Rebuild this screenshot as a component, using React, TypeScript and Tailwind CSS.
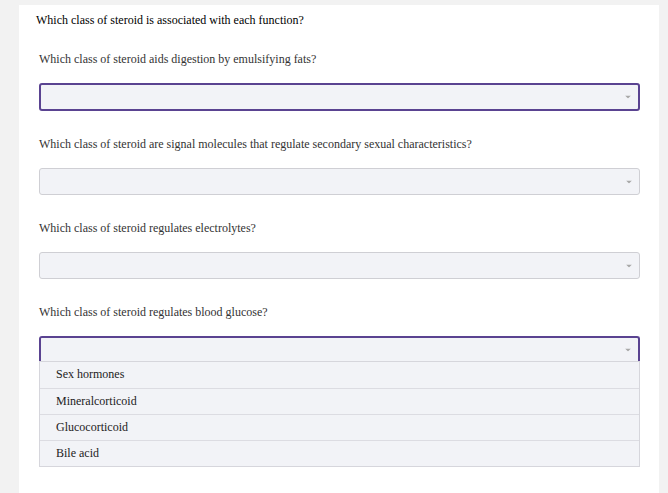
const questions = [
  "Which class of steroid aids digestion by emulsifying fats?",
  "Which class of steroid are signal molecules that regulate secondary sexual characteristics?",
  "Which class of steroid regulates electrolytes?",
  "Which class of steroid regulates blood glucose?",
];

const options = ["Sex hormones", "Mineralcorticoid", "Glucocorticoid", "Bile acid"];

function Arrow() {
  return (
    <svg width="6" height="3" viewBox="0 0 6 3" className="absolute right-[7px] top-1/2 -translate-y-1/2">
      <path d="M0 0 L6 0 L3 3 Z" fill="#a8a8a8" />
    </svg>
  );
}

function Select({ state }: { state: "focus" | "idle" | "open" }) {
  if (state === "open") {
    return (
      <div className="relative">
        <div className="relative h-[25px] rounded-t-[3px] border-2 border-b-0 border-[#5a4391] bg-[#f2f3f7]">
          <Arrow />
        </div>
        <div className="border border-[#d6d6dc] bg-[#f2f3f7]">
          {options.map((o, i) => (
            <div
              key={o}
              className={"h-[26px] flex items-center pl-[16px] pb-[2px] text-[12px] text-[#222] " + (i > 0 ? "border-t border-[#dcdce2]" : "")}
            >
              {o}
            </div>
          ))}
        </div>
      </div>
    );
  }
  return (
    <div
      className={
        "relative h-[27px] rounded-[3px] bg-[#f2f3f7] " +
        (state === "focus" ? "h-[28px] border-2 border-[#5a4391]" : "border border-[#cfcfd4]")
      }
    >
      <Arrow />
    </div>
  );
}

export default function App() {
  return (
    <div className="min-h-[493px] bg-[#f2f2f2] pl-[19px] pr-[9px] pt-[5px]" style={{ fontFamily: '"Liberation Serif", "Times New Roman", serif' }}>
      <div className="min-h-[488px] bg-white pl-[17px] pr-[19px] pt-[8px]">
        <h1 className="text-[12px] leading-[15px] text-black">Which class of steroid is associated with each function?</h1>
        <div className="pl-[3px] pt-[24px]">
          {questions.map((q, i) => (
            <div key={q} className="mb-[26px]">
              <p className="text-[12px] leading-[15px] text-[#333] mb-[16px]">{q}</p>
              <Select state={i === 0 ? "focus" : i === 3 ? "open" : "idle"} />
            </div>
          ))}
        </div>
      </div>
    </div>
  );
}
